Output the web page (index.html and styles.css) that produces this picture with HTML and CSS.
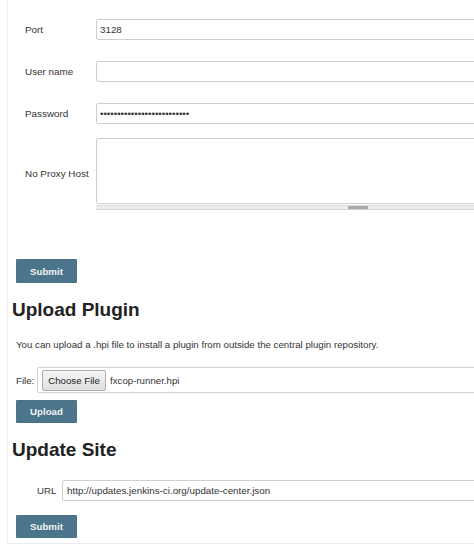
FILE: index.html
```html
<!DOCTYPE html>
<html>
<head>
<meta charset="utf-8">
<link rel="stylesheet" href="styles.css">
</head>
<body>
<div class="panel">
  <form class="proxy">
    <div class="row">
      <label class="lbl">Port</label>
      <input class="field" type="text" value="3128">
    </div>
    <div class="row">
      <label class="lbl">User name</label>
      <input class="field" type="text" value="">
    </div>
    <div class="row">
      <label class="lbl">Password</label>
      <input class="field" type="password" value="abcdefghijklmnopqrstuvwxyz">
    </div>
    <div class="row row-area">
      <label class="lbl">No Proxy Host</label>
      <div class="area-wrap">
        <textarea class="area"></textarea>
        <div class="grip"><span class="thumb"></span></div>
      </div>
    </div>
    <button type="button" class="btn btn-first">Submit</button>
  </form>

  <h1 class="heading">Upload Plugin</h1>
  <p class="desc">You can upload a .hpi file to install a plugin from outside the central plugin repository.</p>
  <div class="file-row">
    <span class="file-lbl">File:</span>
    <div class="file-box">
      <button type="button" class="choose">Choose File</button>
      <span class="file-name">fxcop-runner.hpi</span>
    </div>
  </div>
  <button type="button" class="btn btn-upload">Upload</button>

  <h1 class="heading heading-site">Update Site</h1>
  <div class="url-row">
    <span class="url-lbl">URL</span>
    <input class="field url-field" type="text" value="http://updates.jenkins-ci.org/update-center.json">
  </div>
  <button type="button" class="btn btn-last">Submit</button>
</div>
</body>
</html>
```

FILE: styles.css
```css
html, body {
  margin: 0;
  padding: 0;
  background: #fff;
  overflow: hidden;
}
body {
  font-family: "Liberation Sans", Arial, sans-serif;
  font-size: 9.7px;
  color: #333;
  width: 474px;
  height: 557px;
}
.panel {
  margin-left: 7px;
  width: 466px;
  overflow: hidden;
  border-left: 1px solid #f0f0f0;
  border-bottom: 1px solid #ececec;
  padding-bottom: 5px;
}
.proxy {
  display: flex;
  flex-direction: column;
  padding-top: 19px;
}
.row {
  display: flex;
  align-items: center;
  height: 21px;
  margin-bottom: 21px;
}
.row-area {
  height: auto;
  margin-top: -7px;
  align-items: flex-start;
  margin-bottom: 0;
}
.lbl {
  width: 71px;
  padding-left: 17px;
  flex: none;
  font-size: 9.9px;
  color: #333;
}
.row-area .lbl {
  margin-top: 30px;
}
.field {
  box-sizing: border-box;
  width: 420px;
  flex: none;
  height: 21px;
  border: 1px solid #cfcfcf;
  border-radius: 2px;
  padding: 0 3px;
  margin: 0;
  font-family: "Liberation Sans", Arial, sans-serif;
  font-size: 9.8px;
  color: #333;
  background: #fff;
  outline: none;
}
.area-wrap {
  display: flex;
  flex-direction: column;
  flex: none;
}
.area {
  box-sizing: border-box;
  width: 420px;
  height: 66px;
  border: 1px solid #cfcfcf;
  border-radius: 2px;
  margin: 0;
  resize: none;
  overflow: hidden;
  outline: none;
}
.grip {
  margin-top: 1px;
  width: 420px;
  height: 5px;
  box-sizing: border-box;
  background: #ededed;
  border-top: 1px solid #dadada;
  border-bottom: 1px solid #d4d4d4;
  border-radius: 2px 0 0 2px;
  position: relative;
}
.thumb {
  position: absolute;
  left: 252px;
  top: 0;
  width: 20px;
  height: 3px;
  background: #aaa;
}
.btn {
  display: block;
  box-sizing: border-box;
  width: 61px;
  height: 24px;
  margin: 0 0 0 8px;
  padding: 0;
  border: none;
  border-radius: 1px;
  background: #4b758b;
  color: #f2f4f6;
  font-family: "Liberation Sans", Arial, sans-serif;
  font-weight: bold;
  font-size: 9.7px;
}
.btn-first {
  margin-top: 49px;
}
.heading {
  margin: 16px 0 0 4px;
  font-size: 19px;
  line-height: 22px;
  font-weight: bold;
  color: #222;
}
.desc {
  margin: 17px 0 0 8px;
  line-height: 13px;
}
.file-row {
  display: flex;
  align-items: center;
  margin-top: 16px;
  margin-left: 8px;
}
.file-lbl {
  width: 21px;
  flex: none;
}
.file-box {
  box-sizing: border-box;
  width: 450px;
  flex: none;
  height: 26px;
  border: 1px solid #d2d2d2;
  border-radius: 2px;
  display: flex;
  align-items: center;
  padding-left: 4px;
}
.choose {
  box-sizing: border-box;
  width: 64px;
  height: 21px;
  margin: 0;
  padding: 0;
  border: 1px solid #adadad;
  border-radius: 2px;
  background: linear-gradient(#f6f6f6, #dedede);
  font-family: "Liberation Sans", Arial, sans-serif;
  font-size: 9.7px;
  color: #222;
}
.file-name {
  margin-left: 4px;
}
.btn-upload {
  margin-top: 7px;
  height: 23px;
}
.heading-site {
  margin-top: 16px;
}
.url-row {
  display: flex;
  align-items: center;
  margin-top: 19px;
  margin-left: 29px;
}
.url-lbl {
  width: 25px;
  flex: none;
}
.url-field {
  padding-left: 4px;
}
.btn-last {
  margin-top: 14px;
  height: 23px;
}
```
